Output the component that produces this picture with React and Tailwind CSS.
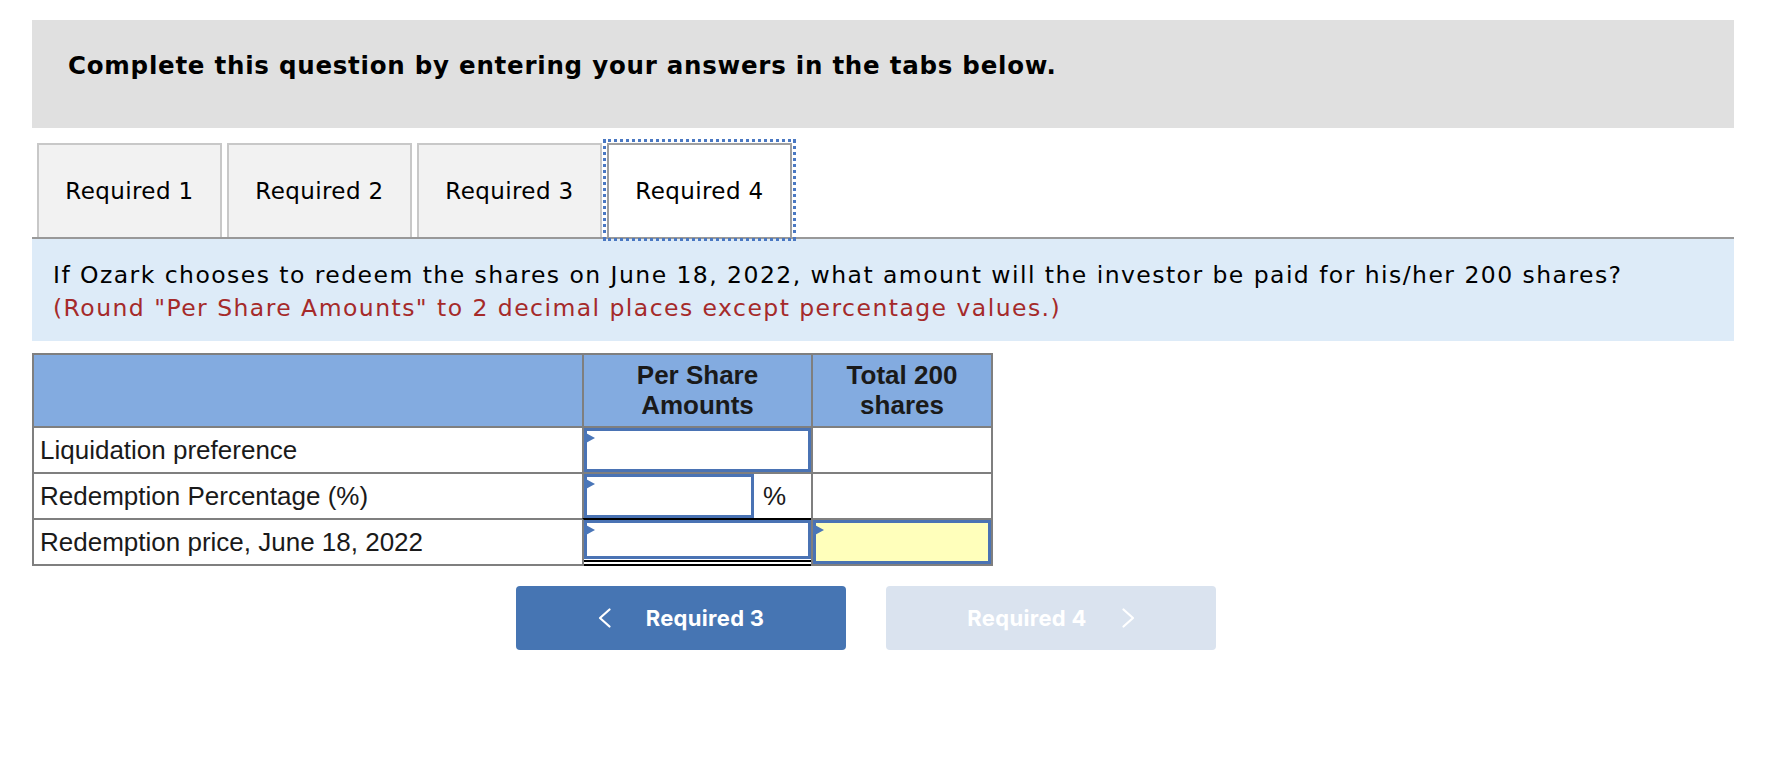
import React from 'react';

const verdana = { fontFamily: '"DejaVu Sans", Verdana, sans-serif' };

function Marker() {
  return (
    <div className="absolute left-0 top-[4px] w-0 h-0 border-y-[6px] border-y-transparent border-l-[11px] border-l-[#4a76b8]" />
  );
}

function Chevron({ dir }) {
  return (
    <svg width="13" height="20" viewBox="0 0 13 20" fill="none">
      <polyline
        points={dir === 'left' ? '11.5,1.5 2,10 11.5,18.5' : '1.5,1.5 11,10 1.5,18.5'}
        stroke="white"
        strokeWidth="2.2"
        strokeLinecap="round"
        strokeLinejoin="round"
      />
    </svg>
  );
}

const tabs = ['Required 1', 'Required 2', 'Required 3', 'Required 4'];

export default function App() {
  return (
    <div className="w-full h-[772px] bg-white px-[32px] pt-[20px] text-black">
      <div className="w-[1702px]">
        {/* header bar */}
        <div className="h-[108px] bg-[#e0e0e0] pl-[36px] pt-[31px]">
          <h2 className="text-[24.5px] leading-[30px] font-bold tracking-[0.75px]" style={verdana}>
            Complete this question by entering your answers in the tabs below.
          </h2>
        </div>

        {/* tabs */}
        <div className="flex gap-[5px] pl-[5px] mt-[15px] h-[94px]" style={verdana}>
          {tabs.map((t, i) => {
            const active = i === 3;
            return (
              <div
                key={t}
                className={
                  active
                    ? 'w-[185px] h-full flex items-center justify-center bg-white border-2 border-b-0 border-[#a0a0a0] outline-[3px] outline-dotted outline-offset-[1px] outline-[#4a78c2] text-[23px] tracking-[0.4px]'
                    : 'w-[185px] h-full flex items-center justify-center bg-[#f2f2f2] border-2 border-b-0 border-[#c8c8c8] text-[23px] tracking-[0.4px]'
                }
              >
                {t}
              </div>
            );
          })}
        </div>

        {/* question band */}
        <div
          className="border-t-2 border-[#999999] bg-[#ddebf8] pl-[21px] pt-[20px] pb-[17px] text-[23.5px] leading-[32.7px] tracking-[1.45px]"
          style={verdana}
        >
          <p>
            If Ozark chooses to redeem the shares on June 18, 2022, what amount will the investor be paid for his/her 200 shares?
          </p>
          <p className="text-[#a52a2a]">
            (Round "Per Share Amounts" to 2 decimal places except percentage values.)
          </p>
        </div>

        {/* table */}
        <div
          className="mt-[12px] w-[961px] border-2 border-[#7f7f7f] text-[26px] text-[#1a1a1a]"
          style={{ fontFamily: '"Liberation Sans", Arial, sans-serif' }}
        >
          <div className="flex h-[71px] bg-[#83abe0] font-bold leading-[29.7px] text-center">
            <div className="w-[548px]" />
            <div className="w-[229px] border-l-2 border-[#7f7f7f] flex items-center justify-center">
              Per Share
              <br />
              Amounts
            </div>
            <div className="flex-1 border-l-2 border-[#7f7f7f] flex items-center justify-center">
              Total 200
              <br />
              shares
            </div>
          </div>

          {/* row 1 */}
          <div className="flex h-[46px]">
            <div className="w-[548px] border-t-2 border-[#7f7f7f] pl-[6px] flex items-center">
              Liquidation preference
            </div>
            <div className="w-[229px] border-t-2 border-l-2 border-[#7f7f7f] relative">
              <div className="h-full border-[3px] border-[#4a73b4] bg-white" />
              <Marker />
            </div>
            <div className="flex-1 border-t-2 border-l-2 border-[#7f7f7f]" />
          </div>

          {/* row 2 */}
          <div className="flex h-[46px]">
            <div className="w-[548px] border-t-2 border-[#7f7f7f] pl-[6px] flex items-center">
              Redemption Percentage (%)
            </div>
            <div className="w-[229px] border-t-2 border-l-2 border-[#7f7f7f] flex">
              <div className="w-[170px] h-full border-[3px] border-[#4a73b4] bg-white relative">
                <div className="absolute -left-[3px] top-[1px] w-0 h-0 border-y-[6px] border-y-transparent border-l-[11px] border-l-[#4a76b8]" />
              </div>
              <div className="flex-1 pl-[9px] flex items-center">%</div>
            </div>
            <div className="flex-1 border-t-2 border-l-2 border-[#7f7f7f]" />
          </div>

          {/* row 3 */}
          <div className="flex h-[46px]">
            <div className="w-[548px] border-t-2 border-[#7f7f7f] pl-[6px] flex items-center">
              Redemption price, June 18, 2022
            </div>
            <div className="w-[229px] border-t-2 border-l-2 border-[#7f7f7f] border-t-black relative">
              <div className="h-[39px] border-[3px] border-[#4a73b4] bg-white" />
              <div className="mt-[1px] h-[2px] bg-black" />
              <div className="absolute left-0 right-0 -bottom-[2px] h-[2px] bg-black" />
              <Marker />
            </div>
            <div className="flex-1 border-t-2 border-l-2 border-[#7f7f7f] relative">
              <div className="h-full border-[3px] border-[#4a73b4] bg-[#ffffbb]" />
              <Marker />
            </div>
          </div>
        </div>

        {/* nav buttons */}
        <div
          className="flex gap-[40px] ml-[484px] mt-[20px]"
          style={{ fontFamily: 'Inter, "Liberation Sans", Arial, sans-serif' }}
        >
          <button className="w-[330px] h-[64px] rounded-[4px] bg-[#4675b3] text-white font-bold text-[22px] tracking-[0.3px] flex items-center justify-center gap-[35px]">
            <Chevron dir="left" />
            <span>Required 3</span>
          </button>
          <button className="w-[330px] h-[64px] rounded-[4px] bg-[#dae3ef] text-white font-bold text-[22px] tracking-[0.3px] flex items-center justify-center gap-[35px]">
            <span>Required 4</span>
            <Chevron dir="right" />
          </button>
        </div>
      </div>
    </div>
  );
}
